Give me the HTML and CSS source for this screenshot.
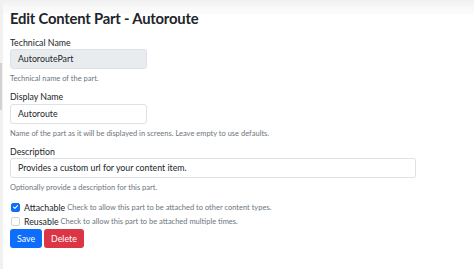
FILE: index.html
```html
<!DOCTYPE html>
<html lang="en">
<head>
<meta charset="utf-8">
<title>Edit Content Part - Autoroute</title>
<link rel="stylesheet" href="styles.css">
</head>
<body>
<div class="frame">
  <div class="rail"><div class="rail-thumb"></div></div>
  <main class="page">
    <h1 class="title">Edit Content Part - Autoroute</h1>
    <div class="field">
      <label class="label">Technical Name</label>
      <div class="input input-readonly input-short">AutoroutePart</div>
      <div class="hint">Technical name of the part.</div>
    </div>
    <div class="field">
      <label class="label">Display Name</label>
      <div class="input input-short">Autoroute</div>
      <div class="hint">Name of the part as it will be displayed in screens. Leave empty to use defaults.</div>
    </div>
    <div class="field">
      <label class="label">Description</label>
      <div class="input input-long">Provides a custom url for your content item.</div>
      <div class="hint">Optionally provide a description for this part.</div>
    </div>
    <div class="checks">
      <div class="check">
        <span class="box box-on"><svg viewBox="0 0 10 10" width="8" height="8"><path d="M2.2 5.2 L4.2 7.1 L7.9 3.0" fill="none" stroke="#fff" stroke-width="1.5" stroke-linecap="round" stroke-linejoin="round"/></svg></span>
        <span class="check-label">Attachable</span>
        <span class="check-hint">Check to allow this part to be attached to other content types.</span>
      </div>
      <div class="check">
        <span class="box"></span>
        <span class="check-label">Reusable</span>
        <span class="check-hint">Check to allow this part to be attached multiple times.</span>
      </div>
    </div>
    <div class="actions">
      <button class="btn btn-primary">Save</button>
      <button class="btn btn-danger">Delete</button>
    </div>
  </main>
</div>
</body>
</html>
```

FILE: styles.css
```css
html, body {
  margin: 0;
  padding: 0;
  background: #fff;
}
body {
  font-family: Lato, "Open Sans", sans-serif;
  color: #212529;
  width: 474px;
  height: 269px;
  overflow: hidden;
}
.frame {
  display: flex;
  height: 269px;
  padding-top: 2px;
  box-sizing: border-box;
  background: linear-gradient(#efefef 0, #f4f4f4 3px, #f9f9f9 8px, #fbfbfb 14px, #fff 15px);
}
.rail {
  width: 3px;
  background: #f1f1f1;
  flex: none;
  padding-top: 61px;
  box-sizing: border-box;
}
.rail-thumb {
  width: 2px;
  height: 47px;
  background: #d2d2d2;
}
.page {
  padding: 7px 0 0 7px;
  flex: 1;
}
.title {
  font-size: 14.8px;
  font-weight: 700;
  line-height: 18px;
  letter-spacing: -0.2px;
  margin: 0 0 9.5px 0;
}
.field {
  margin-bottom: 7px;
}
.label {
  display: block;
  font-size: 8.8px;
  line-height: 12.5px;
}
.input {
  box-sizing: border-box;
  height: 20px;
  border: 1px solid #dee2e6;
  border-radius: 3px;
  padding: 0 7px;
  font-size: 8.8px;
  line-height: 18px;
  background: #fff;
}
.input-readonly {
  background: #e9ecef;
}
.input-short { width: 137px; }
.input-long { width: 406px; }
.hint {
  font-size: 7.5px;
  line-height: 10px;
  color: #6c757d;
  margin-top: 5px;
}
.checks {
  margin-top: 0;
}
.check {
  display: flex;
  align-items: center;
  height: 14px;
}
.box {
  box-sizing: border-box;
  width: 9px;
  height: 9px;
  border: 1px solid #ced4da;
  border-radius: 2px;
  margin: 0 4px 0 1px;
  display: flex;
  align-items: center;
  justify-content: center;
  background: #fff;
}
.box-on {
  background: #0d6efd;
  border-color: #0d6efd;
}
.check-label {
  font-size: 8.8px;
  margin-right: 2px;
}
.check-hint {
  font-size: 7.5px;
  color: #6c757d;
}
.actions {
  display: flex;
  gap: 2px;
  margin-top: 1px;
}
.btn {
  font-family: inherit;
  font-size: 8.8px;
  height: 19px;
  padding: 0 7px;
  border: none;
  border-radius: 3px;
  color: #fff;
}
.btn-primary { background: #0d6efd; }
.btn-danger { background: #dc3545; }
```
